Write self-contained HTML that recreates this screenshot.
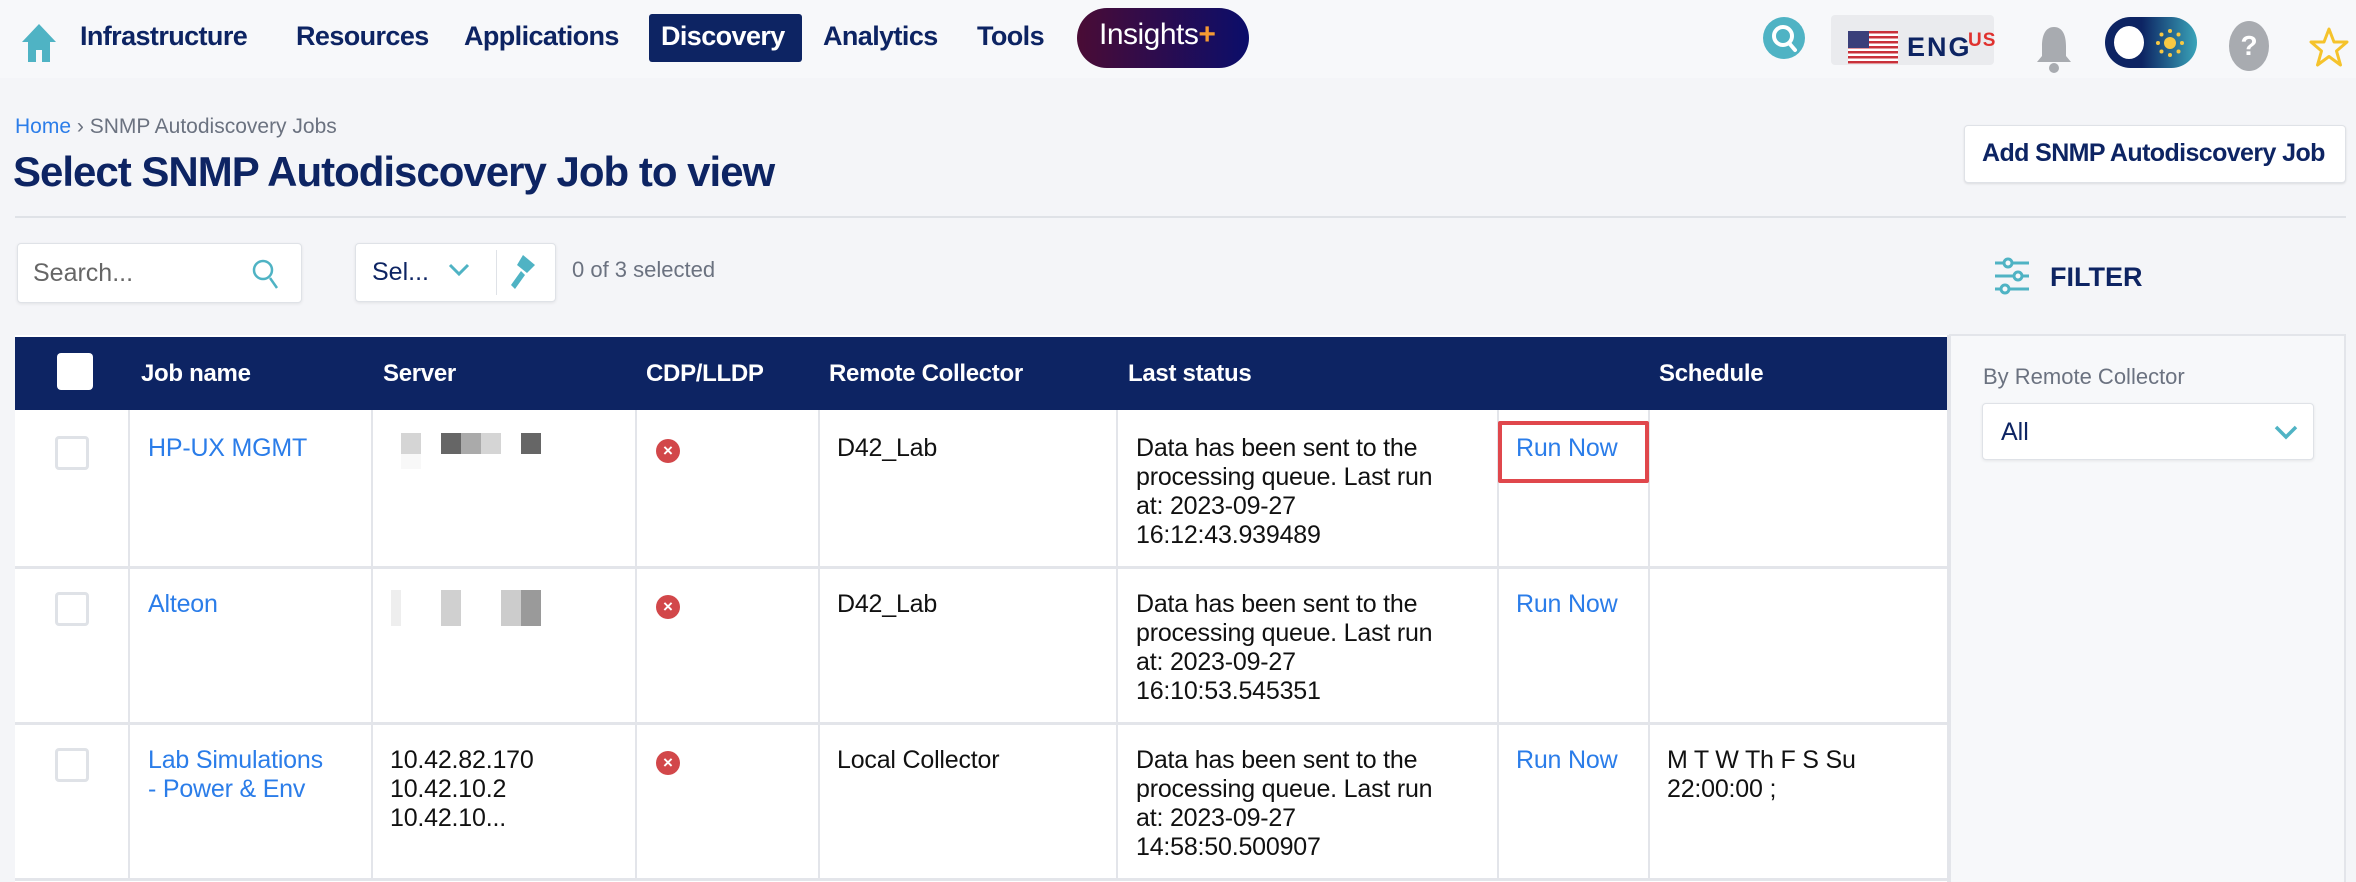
<!DOCTYPE html>
<html><head><meta charset="utf-8"><style>
*{margin:0;padding:0;box-sizing:border-box}
body{width:2356px;height:882px;overflow:hidden;background:#f4f5f8;font-family:"Liberation Sans",sans-serif;position:relative;color:#111}
.a{position:absolute}
.nav{left:0;top:0;width:2356px;height:78px;background:#f7f8fa}
.ni{position:absolute;top:21px;font-weight:bold;font-size:27px;color:#0d2463;letter-spacing:-0.6px}
.hdr{position:absolute;top:360px;font-weight:bold;font-size:24px;color:#fff;letter-spacing:-0.3px}
.cell{position:absolute;font-size:25px;line-height:29px;color:#111;letter-spacing:-0.2px}
.lnk{color:#2b7de9}
.vl{position:absolute;width:2px;background:#e3e5ea;top:410px;height:470px}
.hl{position:absolute;height:3px;background:#e3e5ea;left:15px;width:1934px}
.cb{position:absolute;width:34px;height:34px;border:3px solid #dfe2e7;border-radius:4px;background:#fff}
.px{position:absolute;height:21px}
.xi{position:absolute;width:24px;height:24px;border-radius:50%;background:#d2474a;color:#fff;font-size:17px;font-weight:bold;text-align:center;line-height:24px}
</style></head><body>
<div class="a nav"></div>
<svg class="a" style="left:20px;top:22px" width="38" height="42" viewBox="0 0 38 42"><path d="M19 2 L36 20 L30 20 L30 40 L22 40 L22 28 L16 28 L16 40 L8 40 L8 20 L2 20 Z" fill="#4fb3c4"/></svg>
<div class="ni" style="left:80px">Infrastructure</div>
<div class="ni" style="left:296px">Resources</div>
<div class="ni" style="left:464px">Applications</div>
<div class="a" style="left:649px;top:14px;width:153px;height:48px;background:#0d2463;border-radius:3px"></div>
<div class="ni" style="left:661px;color:#fff">Discovery</div>
<div class="ni" style="left:823px">Analytics</div>
<div class="ni" style="left:977px">Tools</div>
<div class="a" style="left:1077px;top:8px;width:172px;height:60px;border-radius:30px;background:linear-gradient(90deg,#4a0c35,#0b0d6a)"></div>
<div class="a" style="left:1099px;top:18px;color:#fff;font-size:30px;letter-spacing:-0.5px">Insights<span style="color:#f59a33;font-weight:bold">+</span></div>
<svg class="a" style="left:1762px;top:16px" width="44" height="44" viewBox="0 0 44 44"><circle cx="22" cy="22" r="21" fill="#4fb3c4"/><circle cx="21" cy="20" r="9" fill="none" stroke="#fff" stroke-width="4"/><path d="M27 27 L33 34" stroke="#fff" stroke-width="4" stroke-linecap="round"/></svg>
<div class="a" style="left:1831px;top:15px;width:163px;height:50px;background:#eaebee;border-radius:4px"></div>
<svg class="a" style="left:1848px;top:31px" width="50" height="33" viewBox="0 0 50 33"><rect width="50" height="33" fill="#fff"/><g fill="#c8313a"><rect y="0" width="50" height="2.5"/><rect y="5" width="50" height="2.5"/><rect y="10" width="50" height="2.5"/><rect y="15" width="50" height="2.5"/><rect y="20" width="50" height="2.5"/><rect y="25" width="50" height="2.5"/><rect y="30" width="50" height="2.5"/></g><rect width="21" height="17" fill="#3a3f7a"/></svg>
<div class="a" style="left:1907px;top:32px;font-weight:bold;font-size:27px;color:#0d2463;letter-spacing:2px">ENG</div>
<div class="a" style="left:1968px;top:30px;font-weight:bold;font-size:19px;color:#e0312e;letter-spacing:1px">US</div>
<svg class="a" style="left:2035px;top:24px" width="38" height="52" viewBox="0 0 38 52"><path d="M19 3 C10 3 7 12 7 22 L7 32 L2 38 L36 38 L31 32 L31 22 C31 12 28 3 19 3Z" fill="#a8abb0"/><circle cx="19" cy="44" r="5" fill="#a8abb0"/></svg>
<div class="a" style="left:2105px;top:17px;width:92px;height:51px;border-radius:26px;background:linear-gradient(90deg,#0d2463 40%,#3aa4b9)"></div>
<div class="a" style="left:2114px;top:26px;width:30px;height:33px;border-radius:50%;background:#fff"></div>
<svg class="a" style="left:2155px;top:28px" width="30" height="30" viewBox="0 0 30 30"><circle cx="15" cy="15" r="6" fill="#f7c843"/><g fill="#f7c843"><circle cx="15" cy="3" r="2"/><circle cx="15" cy="27" r="2"/><circle cx="3" cy="15" r="2"/><circle cx="27" cy="15" r="2"/><circle cx="6.5" cy="6.5" r="2"/><circle cx="23.5" cy="23.5" r="2"/><circle cx="6.5" cy="23.5" r="2"/><circle cx="23.5" cy="6.5" r="2"/></g></svg>
<div class="a" style="left:2229px;top:21px;width:40px;height:50px;border-radius:50%;background:#a8abb0;color:#fff;font-weight:bold;font-size:28px;text-align:center;line-height:50px">?</div>
<svg class="a" style="left:2309px;top:26px" width="40" height="42" viewBox="0 0 40 42"><path d="M20 3 L25 16 L38 16 L27.5 25 L31.5 39 L20 30.5 L8.5 39 L12.5 25 L2 16 L15 16 Z" fill="none" stroke="#f5c32c" stroke-width="3" stroke-linejoin="round"/></svg>

<div class="a" style="left:15px;top:115px;font-size:21px;color:#6b7280"><span class="lnk">Home</span> › SNMP Autodiscovery Jobs</div>
<div class="a" style="left:13px;top:148px;font-size:42px;font-weight:bold;color:#0d2463;letter-spacing:-1px">Select SNMP Autodiscovery Job to view</div>
<div class="a" style="left:1964px;top:125px;width:382px;height:58px;background:#fff;border:1px solid #dfe2e7;border-radius:4px;box-shadow:0 1px 2px rgba(0,0,0,.1)"></div>
<div class="a" style="left:1982px;top:139px;font-size:25px;font-weight:bold;color:#0d2463;letter-spacing:-0.6px">Add SNMP Autodiscovery Job</div>
<div class="a" style="left:15px;top:216px;width:2331px;height:2px;background:#dfe2e7"></div>

<div class="a" style="left:17px;top:243px;width:285px;height:60px;background:#fff;border:1px solid #dfe2e7;border-radius:4px;box-shadow:0 1px 3px rgba(0,0,0,.08)"></div>
<div class="a" style="left:33px;top:259px;font-size:25px;color:#666">Search...</div>
<svg class="a" style="left:251px;top:258px" width="30" height="34" viewBox="0 0 30 34"><circle cx="12" cy="12" r="9" fill="none" stroke="#4fb3c4" stroke-width="2.5"/><path d="M19 20 L26 30" stroke="#4fb3c4" stroke-width="2.5"/></svg>
<div class="a" style="left:355px;top:243px;width:201px;height:59px;background:#fff;border:1px solid #dfe2e7;border-radius:4px;box-shadow:0 1px 3px rgba(0,0,0,.08)"></div>
<div class="a" style="left:372px;top:258px;font-size:25px;color:#0d2463">Sel...</div>
<svg class="a" style="left:448px;top:262px" width="22" height="16" viewBox="0 0 22 16"><path d="M2 3 L11 12 L20 3" fill="none" stroke="#4fb3c4" stroke-width="3"/></svg>
<div class="a" style="left:496px;top:250px;width:1px;height:45px;background:#dfe2e7"></div>
<svg class="a" style="left:509px;top:253px" width="28" height="40" viewBox="0 0 28 40"><path d="M14 2 L26 12 L18 20 L8 12 Z" fill="#4fb3c4"/><path d="M12 18 L2 32 L6 36 L16 22 Z" fill="#4fb3c4"/></svg>
<div class="a" style="left:572px;top:257px;font-size:22px;color:#6b7280">0 of 3 selected</div>
<svg class="a" style="left:1994px;top:257px" width="36" height="38" viewBox="0 0 36 38"><g stroke="#4fb3c4" stroke-width="3" fill="#f7f8fa"><line x1="1" y1="6" x2="35" y2="6"/><line x1="1" y1="19" x2="35" y2="19"/><line x1="1" y1="32" x2="35" y2="32"/><circle cx="14" cy="6" r="4"/><circle cx="24" cy="19" r="4"/><circle cx="11" cy="32" r="4"/></g></svg>
<div class="a" style="left:2050px;top:262px;font-size:27px;font-weight:bold;color:#0d2463">FILTER</div>

<div class="a" style="left:15px;top:335px;width:1934px;height:547px;background:#fff"></div>
<div class="a" style="left:15px;top:337px;width:1934px;height:73px;background:#0d2463"></div>
<div class="a" style="left:57px;top:353px;width:36px;height:37px;background:#fff;border-radius:4px"></div>
<div class="hdr" style="left:141px">Job name</div>
<div class="hdr" style="left:383px">Server</div>
<div class="hdr" style="left:646px">CDP/LLDP</div>
<div class="hdr" style="left:829px">Remote Collector</div>
<div class="hdr" style="left:1128px">Last status</div>
<div class="hdr" style="left:1659px">Schedule</div>
<div class="vl" style="left:128px"></div><div class="vl" style="left:371px"></div><div class="vl" style="left:635px"></div><div class="vl" style="left:818px"></div><div class="vl" style="left:1116px"></div><div class="vl" style="left:1497px"></div><div class="vl" style="left:1648px"></div><div class="vl" style="left:1947px;top:335px;height:547px"></div>
<div class="hl" style="top:566px"></div><div class="hl" style="top:722px"></div><div class="hl" style="top:878px"></div>

<div class="cb" style="left:55px;top:436px"></div>
<div class="cb" style="left:55px;top:592px"></div>
<div class="cb" style="left:55px;top:748px"></div>
<div class="cell lnk" style="left:148px;top:434px">HP-UX MGMT</div>
<div class="cell lnk" style="left:148px;top:590px">Alteon</div>
<div class="cell lnk" style="left:148px;top:746px">Lab Simulations<br>- Power &amp; Env</div>
<div class="px" style="left:401px;top:433px;width:20px;background:#d5d5d5"></div>
<div class="px" style="left:401px;top:454px;width:20px;height:15px;background:#f8f8f8"></div>
<div class="px" style="left:441px;top:433px;width:20px;background:#666"></div>
<div class="px" style="left:461px;top:433px;width:20px;background:#aaa"></div>
<div class="px" style="left:481px;top:433px;width:20px;background:#d5d5d5"></div>
<div class="px" style="left:521px;top:433px;width:20px;background:#666"></div>
<div class="px" style="left:391px;top:590px;width:10px;height:36px;background:#eee"></div>
<div class="px" style="left:441px;top:590px;width:20px;height:36px;background:#d0d0d0"></div>
<div class="px" style="left:501px;top:590px;width:20px;height:36px;background:#ccc"></div>
<div class="px" style="left:521px;top:590px;width:20px;height:36px;background:#9a9a9a"></div>
<div class="cell" style="left:390px;top:746px">10.42.82.170<br>10.42.10.2<br>10.42.10...</div>
<div class="xi" style="left:656px;top:439px">×</div>
<div class="xi" style="left:656px;top:595px">×</div>
<div class="xi" style="left:656px;top:751px">×</div>
<div class="cell" style="left:837px;top:434px">D42_Lab</div>
<div class="cell" style="left:837px;top:590px">D42_Lab</div>
<div class="cell" style="left:837px;top:746px">Local Collector</div>
<div class="cell" style="left:1136px;top:434px">Data has been sent to the<br>processing queue. Last run<br>at: 2023-09-27<br>16:12:43.939489</div>
<div class="cell" style="left:1136px;top:590px">Data has been sent to the<br>processing queue. Last run<br>at: 2023-09-27<br>16:10:53.545351</div>
<div class="cell" style="left:1136px;top:746px">Data has been sent to the<br>processing queue. Last run<br>at: 2023-09-27<br>14:58:50.500907</div>
<div class="a" style="left:1498px;top:421px;width:151px;height:62px;border:4px solid #e0474c;border-radius:2px"></div>
<div class="cell lnk" style="left:1516px;top:434px">Run Now</div>
<div class="cell lnk" style="left:1516px;top:590px">Run Now</div>
<div class="cell lnk" style="left:1516px;top:746px">Run Now</div>
<div class="cell" style="left:1667px;top:746px">M T W Th F S Su<br>22:00:00 ;</div>

<div class="a" style="left:1949px;top:334px;width:397px;height:548px;background:#f7f8fa;border:2px solid #e3e5ea;border-bottom:none"></div>
<div class="a" style="left:1983px;top:364px;font-size:22px;color:#6b7280">By Remote Collector</div>
<div class="a" style="left:1982px;top:403px;width:332px;height:57px;background:#fff;border:1px solid #dfe2e7;border-radius:4px;box-shadow:0 1px 3px rgba(0,0,0,.08)"></div>
<div class="a" style="left:2001px;top:418px;font-size:25px;color:#0d2463">All</div>
<svg class="a" style="left:2274px;top:423px" width="24" height="18" viewBox="0 0 24 18"><path d="M2 4 L12 14 L22 4" fill="none" stroke="#4fb3c4" stroke-width="3.5"/></svg>
</body></html>
